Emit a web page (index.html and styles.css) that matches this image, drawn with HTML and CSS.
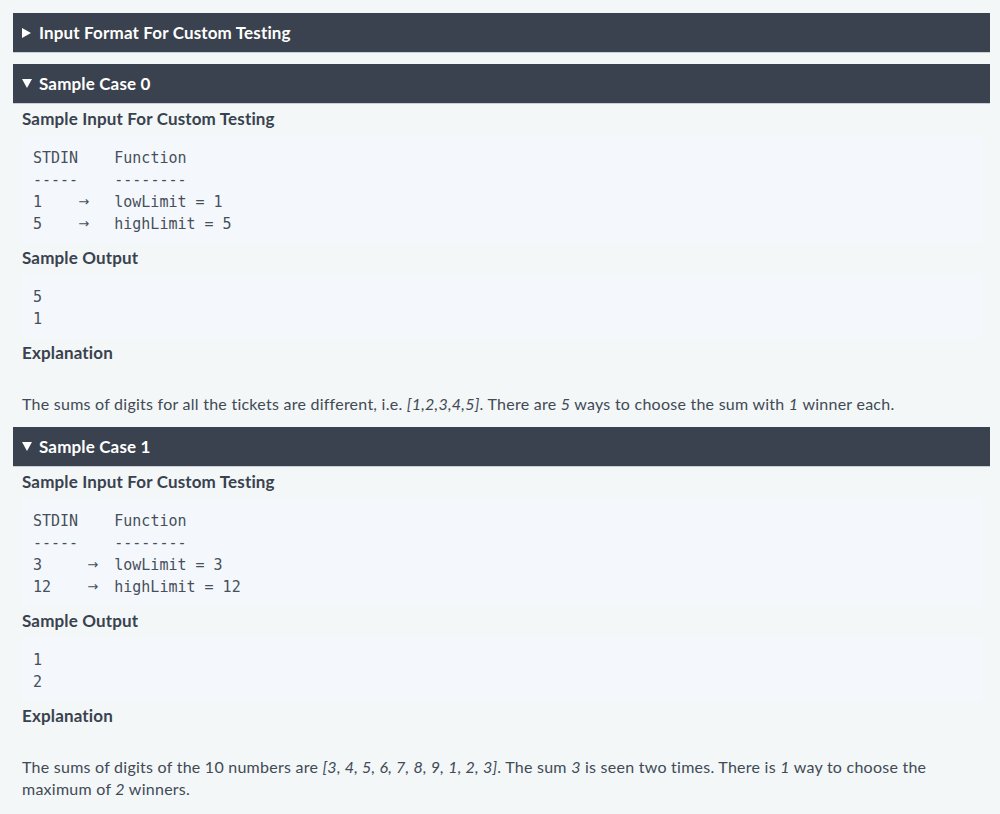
FILE: index.html
```html
<!DOCTYPE html>
<html>
<head>
<meta charset="utf-8">
<link rel="stylesheet" href="styles.css">
</head>
<body>
<div class="page">
  <section class="collapse">
    <div class="bar"><span class="tri tri-right"></span><span class="bar-title">Input Format For Custom Testing</span></div>
  </section>

  <section class="collapse">
    <div class="bar"><span class="tri tri-down"></span><span class="bar-title">Sample Case 0</span></div>
    <div class="body">
      <h4 class="sub">Sample Input For Custom Testing</h4>
      <pre class="code">STDIN    Function
-----    --------
1    <span class="arr">→</span>   lowLimit = 1
5    <span class="arr">→</span>   highLimit = 5</pre>
      <h4 class="sub">Sample Output</h4>
      <pre class="code">5
1</pre>
      <h4 class="sub">Explanation</h4>
      <p class="text">The sums of digits for all the tickets are different, i.e. <em>[1,2,3,4,5]</em>. There are <em>5</em> ways to choose the sum with <em>1</em> winner each.</p>
    </div>
  </section>

  <section class="collapse">
    <div class="bar"><span class="tri tri-down"></span><span class="bar-title">Sample Case 1</span></div>
    <div class="body">
      <h4 class="sub">Sample Input For Custom Testing</h4>
      <pre class="code">STDIN    Function
-----    --------
3     <span class="arr">→</span>  lowLimit = 3
12    <span class="arr">→</span>  highLimit = 12</pre>
      <h4 class="sub">Sample Output</h4>
      <pre class="code">1
2</pre>
      <h4 class="sub">Explanation</h4>
      <p class="text">The sums of digits of the 10 numbers are <em>[3, 4, 5, 6, 7, 8, 9, 1, 2, 3]</em>. The sum <em>3</em> is seen two times. There is <em>1</em> way to choose the maximum of <em>2</em> winners.</p>
    </div>
  </section>
</div>
</body>
</html>
```

FILE: styles.css
```css
html, body {
  margin: 0;
  padding: 0;
  background: #f3f7f8;
}
body {
  font-family: Lato, "Open Sans", sans-serif;
  color: #39424e;
}
.page {
  padding: 13px 10px 0 13px;
}
.collapse {
  margin-bottom: 11px;
}
.bar {
  height: 40px;
  background: #39424e;
  box-sizing: border-box;
  border-bottom: 1px solid #c9ced5;
  display: flex;
  align-items: center;
  padding-left: 9px;
}
.tri {
  display: inline-block;
  width: 0;
  height: 0;
  margin-right: 8px;
}
.tri-right {
  border-top: 5px solid transparent;
  border-bottom: 5px solid transparent;
  border-left: 9px solid #ffffff;
}
.tri-down {
  border-left: 5px solid transparent;
  border-right: 5px solid transparent;
  border-top: 9px solid #ffffff;
  margin-right: 7px;
}
.bar-title {
  color: #ffffff;
  font-weight: 700;
  font-size: 17px;
  line-height: 20px;
  letter-spacing: 0.15px;
}
.body {
  padding: 0 8px 1px 9px;
}
.sub {
  margin: 0;
  padding: 5px 0 7px;
  font-size: 17px;
  line-height: 19px;
  font-weight: 700;
  color: #39424e;
  letter-spacing: 0.15px;
}
.code {
  margin: 0;
  padding: 12px 11px 8px;
  background: #f4f8fd;
  font-family: "DejaVu Sans Mono", "Liberation Mono", monospace;
  font-size: 15px;
  line-height: 22px;
  color: #464f5a;
}
.arr {
  display: inline-block;
  width: 9px;
  text-align: center;
  font-family: "DejaVu Sans", sans-serif;
  font-size: 13px;
  line-height: 22px;
  vertical-align: top;
}
.text {
  margin: 24px 0 0;
  font-size: 16px;
  line-height: 22px;
  color: #414a55;
  letter-spacing: 0.25px;
}
.text em {
  font-style: italic;
}
```
